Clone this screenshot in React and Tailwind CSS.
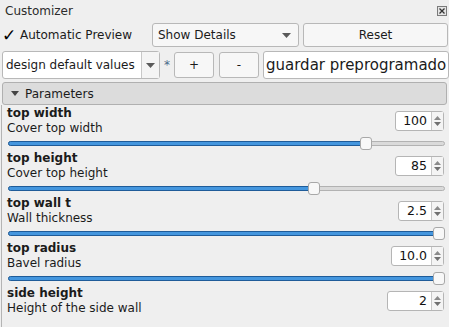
const params = [
  { name: "top width", desc: "Cover top width", value: "100", pct: 82, spinW: 49, slider: true },
  { name: "top height", desc: "Cover top height", value: "85", pct: 70, spinW: 49, slider: true },
  { name: "top wall t", desc: "Wall thickness", value: "2.5", pct: 100, spinW: 46, slider: true },
  { name: "top radius", desc: "Bavel radius", value: "10.0", pct: 100, spinW: 53, slider: true },
  { name: "side height", desc: "Height of the side wall", value: "2", pct: 0, spinW: 57, slider: false },
];

function Arrow() {
  return (
    <svg width="9" height="5" viewBox="0 0 9 5">
      <path d="M0 0 L9 0 L4.5 5 Z" fill="#5a5a5a" />
    </svg>
  );
}

function SpinBox({ value, width }) {
  return (
    <div
      className="flex h-[20px] items-stretch rounded-[3px] border border-[#b5b5b5] bg-white"
      style={{ width }}
    >
      <div className="flex flex-1 items-center justify-end pr-[4px] text-[12.5px] text-[#111]">{value}</div>
      <div className="flex w-[12px] flex-col items-center justify-center gap-[2px] border-l border-[#c8c8c8] bg-[#f4f4f4]">
        <svg width="7" height="4" viewBox="0 0 7 4">
          <path d="M0 4 L3.5 0 L7 4 Z" fill="#8a8a8a" />
        </svg>
        <svg width="7" height="4" viewBox="0 0 7 4">
          <path d="M0 0 L7 0 L3.5 4 Z" fill="#707070" />
        </svg>
      </div>
    </div>
  );
}

function Slider({ pct }) {
  return (
    <div className="relative mx-[6px] h-[15px] w-[437px]">
      <div className="absolute left-0 right-0 top-[5px] h-[5px] rounded-full border border-[#b2b2b2] bg-[#dadada]" />
      <div
        className="absolute left-0 top-[5px] h-[5px] rounded-full border border-[#1f5c99] bg-[#4496de]"
        style={{ width: `${pct}%` }}
      />
      <div
        className="absolute top-[1px] h-[13px] w-[12px] -translate-x-1/2 rounded-[3px] border border-[#a8a8a8] bg-[#f8f8f8]"
        style={{ left: `calc(${pct}% ${pct === 100 ? "- 6px" : "+ 0px"})` }}
      />
    </div>
  );
}

export default function App() {
  return (
    <div
      className="flex h-[327px] w-[449px] flex-col overflow-hidden whitespace-nowrap bg-[#efefef] text-[12px] text-[#1b1b1b]"
      style={{ fontFamily: '"DejaVu Sans", sans-serif' }}
    >
      <div className="flex h-[21px] shrink-0 items-center justify-between pl-[5px] pr-[2px]">
        <span className="text-[#2c2c2c]">Customizer</span>
        <div className="flex h-[10px] w-[10px] items-center justify-center border border-[#7a7a7a] bg-[#e4e4e4]">
          <svg width="6" height="6" viewBox="0 0 6 6">
            <path d="M0.5 0.5 L5.5 5.5 M5.5 0.5 L0.5 5.5" stroke="#333" strokeWidth="1.3" />
          </svg>
        </div>
      </div>

      <div className="mt-[2px] flex h-[24px] shrink-0 items-center">
        <span className="ml-[2px] w-[16px] text-[17px] leading-none text-black">✓</span>
        <span className="ml-[2px] w-[132px]">Automatic Preview</span>
        <div className="flex h-[24px] w-[147px] items-center justify-between rounded-[3px] border border-[#b8b8b8] bg-[#f7f7f7] pl-[5px] pr-[7px]">
          <span>Show Details</span>
          <Arrow />
        </div>
        <div className="ml-[4px] flex h-[24px] w-[145px] items-center justify-center rounded-[3px] border border-[#b8b8b8] bg-[#f7f7f7]">
          Reset
        </div>
      </div>

      <div className="mt-[4px] flex h-[28px] shrink-0 items-center pl-[2px]">
        <div className="flex h-[28px] w-[158px] items-stretch rounded-[3px] border border-[#b8b8b8] bg-white">
          <span className="flex flex-1 items-center pl-[3px]">design default values</span>
          <div className="flex w-[18px] items-center justify-center border-l border-[#c8c8c8] bg-[#f4f4f4]">
            <Arrow />
          </div>
        </div>
        <span className="ml-[4px] w-[10px] text-[12px] text-[#4a6a8a]">*</span>
        <div className="flex h-[26px] w-[40px] items-center justify-center rounded-[3px] border border-[#b8b8b8] bg-[#f7f7f7]">
          +
        </div>
        <div className="ml-[5px] flex h-[26px] w-[40px] items-center justify-center rounded-[3px] border border-[#b8b8b8] bg-[#f7f7f7]">
          -
        </div>
        <div className="ml-[4px] flex h-[28px] flex-1 items-center rounded-[3px] border border-[#b8b8b8] bg-white pl-[2px] text-[15px]">
          guardar preprogramado
        </div>
      </div>

      <div className="mx-[2px] mt-[3px] flex h-[23px] shrink-0 items-center rounded-[3px] border border-[#b0b0b0] bg-[#dcdcdc] pl-[8px]">
        <svg width="8" height="5" viewBox="0 0 8 5">
          <path d="M0 0 L8 0 L4 5 Z" fill="#444" />
        </svg>
        <span className="ml-[6px]">Parameters</span>
      </div>

      <div className="ml-[1px] flex shrink-0 flex-col border-l border-[#b4b4b4] pt-[1px]">
        {params.map((p) => (
          <div key={p.name} className="flex h-[45px] shrink-0 flex-col">
            <div className="flex items-center justify-between pr-[5px]">
              <div className="flex flex-col pl-[5px] leading-[15px]">
                <span className="font-bold">{p.name}</span>
                <span>{p.desc}</span>
              </div>
              <SpinBox value={p.value} width={p.spinW} />
            </div>
            {p.slider && <Slider pct={p.pct} />}
          </div>
        ))}
      </div>
    </div>
  );
}
